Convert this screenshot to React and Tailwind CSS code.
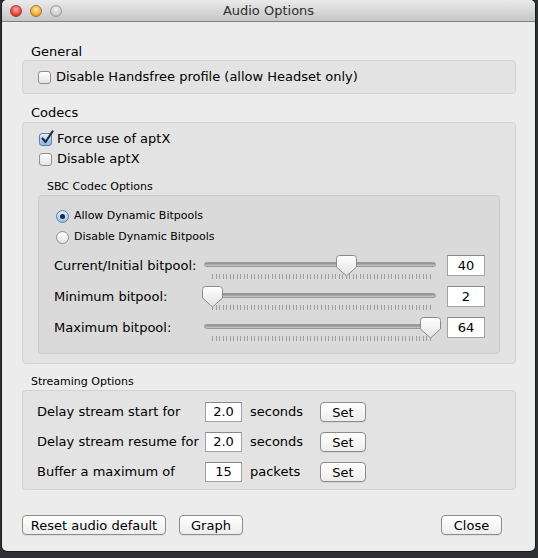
import React from 'react';

const Checkbox = ({ checked }) => (
    <span className="relative shrink-0 w-[13px] h-[13px]">
        {checked ? (
            <span className="absolute inset-0 rounded-[3px] border border-[#5b7fa9] bg-gradient-to-b from-[#e4effb] to-[#8db6e4]" />
        ) : (
            <span className="absolute inset-0 rounded-[3px] border border-[#8f8f8f] bg-gradient-to-b from-white to-[#e4e4e4]" />
        )}
        {checked && (
            <svg className="absolute -top-[3px] left-[1px]" width="15" height="15" viewBox="0 0 15 15">
                <path d="M2.5 8.5 L5.5 12 L12.5 1.5" fill="none" stroke="#1d2b45" strokeWidth="2.2" strokeLinecap="round" strokeLinejoin="round" />
            </svg>
        )}
    </span>
);

const Radio = ({ checked }) => (
    <span className={`relative shrink-0 w-[13px] h-[13px] rounded-full border flex items-center justify-center ${checked ? 'border-[#5b7fa9] bg-gradient-to-b from-[#e4effb] to-[#9cc0e8]' : 'border-[#8f8f8f] bg-gradient-to-b from-white to-[#e4e4e4]'}`}>
        {checked && <span className="w-[5px] h-[5px] rounded-full bg-[#1d2b45]" />}
    </span>
);

const Button = ({ children, className = '' }) => (
    <button className={`shrink-0 h-[20px] rounded-[4px] border border-[#8c8c8c] bg-gradient-to-b from-white to-[#ededed] text-[13px] leading-none text-black whitespace-nowrap shadow-[0_1px_0_rgba(0,0,0,0.06)] ${className}`}>
        {children}
    </button>
);

const Field = ({ value, className = '' }) => (
    <div className={`shrink-0 bg-white border border-[#a3a3a3] border-t-[#8a8a8a] flex items-center justify-center text-[13px] text-black ${className}`}>
        {value}
    </div>
);

const MIN = 2;
const MAX = 64;
const TICKS = Array.from({ length: MAX - MIN + 1 }, (_, i) => i);

const Slider = ({ value }) => {
    const pos = 8 + ((value - MIN) / (MAX - MIN)) * 218;
    return (
        <div className="relative shrink-0 w-[232px] h-[31px]">
            <div className="absolute left-0 right-0 top-[8px] h-[5px] rounded-full bg-gradient-to-b from-[#8d8d8d] to-[#c9c9c9] border border-[#9a9a9a]" />
            <div className="absolute left-[8px] top-[20px] w-[219px] h-[5px]">
                {TICKS.map((i) => (
                    <span key={i} className="absolute top-0 w-px h-[5px] bg-[#9d9d9d]" style={{ left: `${(i / (MAX - MIN)) * 218}px` }} />
                ))}
            </div>
            <svg className="absolute top-[1px]" style={{ left: `${pos - 10}px` }} width="21" height="22" viewBox="0 0 21 22">
                <defs>
                    <linearGradient id={`kg${value}`} x1="0" y1="0" x2="0" y2="1">
                        <stop offset="0" stopColor="#ffffff" />
                        <stop offset="1" stopColor="#e2e2e2" />
                    </linearGradient>
                </defs>
                <path d="M3.5 0.5 H17.5 Q20.5 0.5 20.5 3.5 V12 L10.5 21 L0.5 12 V3.5 Q0.5 0.5 3.5 0.5 Z" fill={`url(#kg${value})`} stroke="#8a8a8a" />
            </svg>
        </div>
    );
};

const SliderRow = ({ label, value }) => (
    <div className="flex h-[31px]">
        <div className="shrink-0 w-[165px] pl-[15px] h-[21px] flex items-center text-[13px] text-black whitespace-nowrap">{label}</div>
        <div className="shrink-0 -mt-[1px]">
            <Slider value={value} />
        </div>
        <Field value={value} className="ml-[11px] w-[38px] h-[21px]" />
    </div>
);

const StreamRow = ({ label, value, unit }) => (
    <div className="flex items-center h-[30px] whitespace-nowrap">
        <div className="shrink-0 w-[168px] h-[20px] flex items-center">{label}</div>
        <Field value={value} className="w-[37px] h-[20px]" />
        <div className="shrink-0 w-[78px] pl-[8px]">{unit}</div>
        <Button className="w-[46px]">Set</Button>
    </div>
);

export default function App() {
    return (
        <div className="w-[538px] h-[558px] bg-[#2f3033] overflow-hidden font-['DejaVu_Sans',sans-serif] text-[13px] text-black">
            <div className="ml-[2px] w-[533px] h-[551px] rounded-[5px] overflow-hidden bg-[#ececec] flex flex-col shadow-[0_0_0_1px_rgba(0,0,0,0.4)]">
                {/* Title bar */}
                <div className="relative h-[22px] shrink-0 bg-gradient-to-b from-[#ebebeb] to-[#c6c6c6] border-b border-[#828282] flex items-center justify-center">
                    <div className="absolute left-[8px] top-[5px] flex gap-[8px]">
                        <span className="w-[12px] h-[12px] rounded-full border border-[#a23d3d] bg-[radial-gradient(circle_at_50%_35%,#ffb0a8,#e8453c_60%,#b8231c)]" />
                        <span className="w-[12px] h-[12px] rounded-full border border-[#a6762a] bg-[radial-gradient(circle_at_50%_35%,#ffe9a6,#f2ad3a_60%,#c47f14)]" />
                        <span className="w-[12px] h-[12px] rounded-full border border-[#9a9a9a] bg-[radial-gradient(circle_at_50%_35%,#f4f4f4,#cdcdcd_60%,#a8a8a8)]" />
                    </div>
                    <span className="text-[13px] text-[#2e2e2e]">Audio Options</span>
                </div>

                <div className="pl-[20px] flex flex-col whitespace-nowrap">
                    {/* General */}
                    <div className="mt-[22px] h-[16px] pl-[9px] leading-[16px]">General</div>
                    <div className="w-[494px] h-[34px] rounded-[4px] border border-[#d2d2d2] bg-[#e3e3e3] flex items-center pl-[15px] gap-[5px]">
                        <Checkbox />
                        <span>Disable Handsfree profile (allow Headset only)</span>
                    </div>

                    {/* Codecs */}
                    <div className="mt-[11px] h-[16px] pl-[9px] leading-[16px]">Codecs</div>
                    <div className="mt-[1px] w-[494px] h-[242px] rounded-[4px] border border-[#d2d2d2] bg-[#e3e3e3] pt-[6px] px-[15px]">
                        <div className="flex items-center h-[20px] gap-[5px] pl-px">
                            <Checkbox checked />
                            <span>Force use of aptX</span>
                        </div>
                        <div className="flex items-center h-[20px] gap-[5px] pl-px">
                            <Checkbox />
                            <span>Disable aptX</span>
                        </div>
                        <div className="mt-[11px] h-[14px] pl-[9px] text-[11px] leading-[14px]">SBC Codec Options</div>
                        <div className="mt-[1px] w-[462px] h-[159px] rounded-[4px] border border-[#cbcbcb] bg-[#dadada] pt-[10px]">
                            <div className="flex items-center h-[21px] gap-[5px] pl-[17px] text-[11px]">
                                <Radio checked />
                                <span>Allow Dynamic Bitpools</span>
                            </div>
                            <div className="flex items-center h-[21px] gap-[5px] pl-[17px] text-[11px]">
                                <Radio />
                                <span>Disable Dynamic Bitpools</span>
                            </div>
                            <div className="mt-[7px]">
                                <SliderRow label="Current/Initial bitpool:" value={40} />
                                <SliderRow label="Minimum bitpool:" value={2} />
                                <SliderRow label="Maximum bitpool:" value={64} />
                            </div>
                        </div>
                    </div>

                    {/* Streaming */}
                    <div className="mt-[11px] h-[14px] pl-[9px] text-[11px] leading-[14px]">Streaming Options</div>
                    <div className="mt-[1px] w-[494px] h-[100px] rounded-[4px] border border-[#d2d2d2] bg-[#e3e3e3] pt-[6px] pl-[14px]">
                        <StreamRow label="Delay stream start for" value="2.0" unit="seconds" />
                        <StreamRow label="Delay stream resume for" value="2.0" unit="seconds" />
                        <StreamRow label="Buffer a maximum of" value="15" unit="packets" />
                    </div>

                    {/* Bottom buttons */}
                    <div className="mt-[25px] flex items-center pr-[33px]">
                        <Button className="w-[144px]">Reset audio default</Button>
                        <Button className="ml-[13px] w-[64px]">Graph</Button>
                        <Button className="ml-auto w-[61px]">Close</Button>
                    </div>
                </div>
            </div>
        </div>
    );
}
